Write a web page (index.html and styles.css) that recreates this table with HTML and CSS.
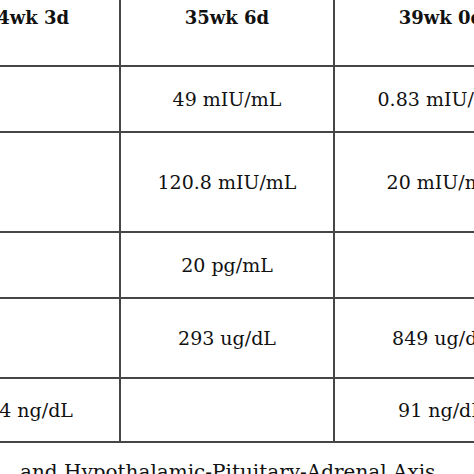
FILE: index.html
```html
<!DOCTYPE html>
<html>
<head>
<meta charset="utf-8">
<link rel="stylesheet" href="styles.css">
</head>
<body>
<div class="page">
  <div class="grid">
    <div class="cell head">34wk 3d</div>
    <div class="cell head">35wk 6d</div>
    <div class="cell head">39wk 0d</div>

    <div class="cell"></div>
    <div class="cell">49 mIU/mL</div>
    <div class="cell">0.83 mIU/mL</div>

    <div class="cell"></div>
    <div class="cell">120.8 mIU/mL</div>
    <div class="cell">20 mIU/mL</div>

    <div class="cell"></div>
    <div class="cell">20 pg/mL</div>
    <div class="cell"></div>

    <div class="cell"></div>
    <div class="cell">293 ug/dL</div>
    <div class="cell">849 ug/dL</div>

    <div class="cell">1.4 ng/dL</div>
    <div class="cell"></div>
    <div class="cell">91 ng/dL</div>
  </div>
  <p class="caption">and Hypothalamic-Pituitary-Adrenal Axis</p>
</div>
</body>
</html>
```

FILE: styles.css
```css
html, body {
  margin: 0;
  padding: 0;
  background: #fff;
  overflow: hidden;
}
body {
  width: 474px;
  height: 474px;
  font-family: "DejaVu Serif", "Liberation Serif", serif;
  color: #111;
}
.page {
  width: 474px;
  height: 474px;
  overflow: hidden;
}
.grid {
  display: grid;
  grid-template-columns: 184px 212px 212px;
  grid-template-rows: 93px 64px 98px 64px 78px 62px;
  gap: 2px;
  padding: 2px;
  background: #464646;
  margin-left: -67px;
  margin-top: -30px;
  width: max-content;
}
.cell {
  background: #fff;
  display: flex;
  align-items: center;
  justify-content: center;
  font-size: 19px;
  white-space: nowrap;
}
.head {
  align-items: flex-start;
  padding-top: 35px;
  font-weight: bold;
  font-size: 18px;
}
.caption {
  margin: 17px 0 0 20px;
  font-size: 20px;
  line-height: 24px;
  white-space: nowrap;
}
```
